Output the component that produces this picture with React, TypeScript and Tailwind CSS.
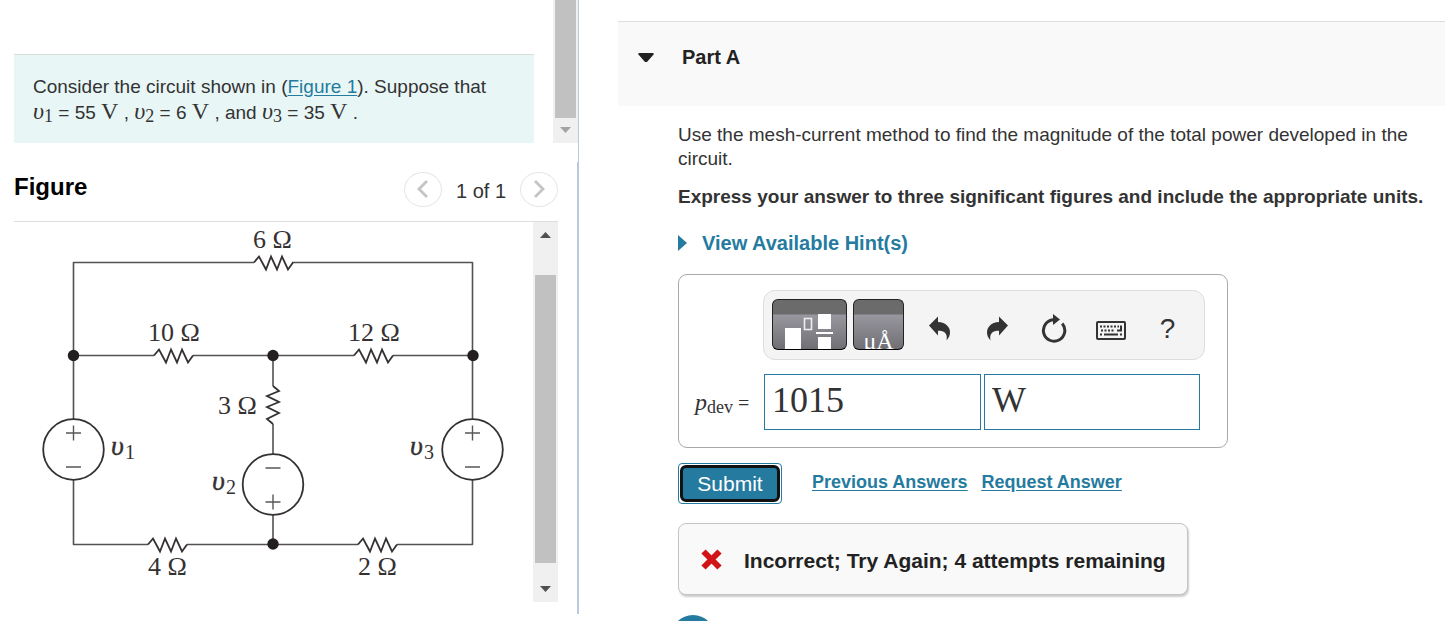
import type { ReactNode } from "react";
import { useState } from "react";

const RESISTOR_H = "l5 -6l7 13l5 -13l6 13l5 -13l6 13l5 -7";

const nodes = [
  [73.5, 355.5],
  [273, 355.5],
  [473, 355.5],
  [273, 544],
];

const labels = [
  { x: 253, y: 248, text: "6 Ω" },
  { x: 148, y: 341, text: "10 Ω" },
  { x: 348, y: 341, text: "12 Ω" },
  { x: 218, y: 414, text: "3 Ω" },
  { x: 148, y: 575, text: "4 Ω" },
  { x: 358, y: 575, text: "2 Ω" },
];

const sources = [
  { cx: 73.5, cy: 449.5, plus: 433, minus: 467, name: "1", x: 111, y: 455 },
  { cx: 273, cy: 484.5, plus: 502, minus: 468, name: "2", x: 212, y: 490 },
  { cx: 472.5, cy: 449.5, plus: 433, minus: 467, name: "3", x: 410, y: 455 },
];

function Circuit() {
  return (
    <svg
      viewBox="14 222 519 380"
      className="block h-[380px] min-w-0 flex-1"
      fill="none"
      role="img"
      aria-label="Circuit with three voltage sources and six resistors"
    >
      <g stroke="#555152" strokeWidth="1.6" strokeLinejoin="round">
        <path d="M73.5 419V262.5H254M292 262.5H472.5V419" />
        <path d="M73.5 355.5H154M193 355.5H354M393 355.5H473" />
        <path d="M273 355V386M273 424V454M273 515V544" />
        <path d="M73.5 480V544.5H148M187 544.5H358M397 544.5H472.5V480" />
      </g>
      <g stroke="#353132" strokeWidth="1.8" strokeLinejoin="miter">
        <path d={`M254 262.5${RESISTOR_H}`} />
        <path d={`M154 355.5${RESISTOR_H}`} />
        <path d={`M354 355.5${RESISTOR_H}`} />
        <path d={`M148 544.5${RESISTOR_H}`} />
        <path d={`M358 544.5${RESISTOR_H}`} />
        <path d="M273 386l6 5l-12 5l12 6l-12 5l12 6l-12 6l6 5" />
      </g>
      {nodes.map(([x, y]) => (
        <circle key={`${x}-${y}`} cx={x} cy={y} r="5.7" fill="#231f20" />
      ))}
      {sources.map((s) => (
        <g key={s.name}>
          <circle cx={s.cx} cy={s.cy} r="30.3" stroke="#353132" strokeWidth="1.8" />
          <path
            d={`M${s.cx - 7.5} ${s.plus}h15M${s.cx} ${s.plus - 7.5}v15M${s.cx - 7.5} ${s.minus}h15`}
            stroke="#5a5657"
            strokeWidth="1.4"
          />
          <text
            x={s.x}
            y={s.y}
            fill="#353132"
            stroke="#353132"
            strokeWidth="0.4"
            className="font-['Liberation_Serif',serif] text-[28px] italic"
          >
            υ
          </text>
          <text x={s.x + 14} y={s.y + 4} fill="#353132" className="font-['Liberation_Serif',serif] text-[20px]">
            {s.name}
          </text>
        </g>
      ))}
      {labels.map((l) => (
        <text key={l.text} x={l.x} y={l.y} fill="#353132" className="font-['Liberation_Serif',serif] text-[26px]">
          {l.text}
        </text>
      ))}
    </svg>
  );
}

function Variable({ index }: { index: number }) {
  return (
    <span className="font-['Liberation_Serif',serif]">
      <i className="text-[24px] leading-none">υ</i>
      <sub className="bottom-[-3px] text-[18px] leading-none">{index}</sub>
    </span>
  );
}

function Volt() {
  return <span className="font-['Liberation_Serif',serif] text-[24px] leading-none">V</span>;
}

function ToolButton({ label, children }: { label: string; children: ReactNode }) {
  return (
    <button type="button" aria-label={label} className="flex h-[51px] w-[57px] items-center justify-center pt-2 text-[#333]">
      {children}
    </button>
  );
}

const darkButton =
  "relative h-[51px] overflow-hidden rounded-md border border-[#222] border-b-black bg-[linear-gradient(#6b6b6b_0,#6b6b6b_14px,#98979f_15px,#6f6e73_50px)]";

function Toolbar() {
  return (
    <div className="flex w-fit items-center rounded-xl border border-[#ddd] bg-[#f4f4f4] px-2 pt-2 pb-[9px]">
      <button type="button" aria-label="Templates" className={`${darkButton} mr-1.5 w-[75px]`}>
        <svg className="block" width="73" height="49" viewBox="0 0 73 49" fill="#fff">
          <rect x="12" y="28" width="16" height="21" />
          <path d="M31.5 18.5h7v11h-7z" fill="none" stroke="#eee" strokeWidth="1.6" />
          <rect x="45" y="14" width="13" height="15" />
          <rect x="43" y="32" width="17" height="2" />
          <rect x="45" y="37" width="13" height="12" />
        </svg>
      </button>
      <button type="button" aria-label="Symbols" className={`${darkButton} flex w-[51px] items-end justify-center`}>
        <span className="-mb-1.5 font-['Liberation_Serif',serif] text-[24px] leading-7 text-white">μÅ</span>
      </button>
      <div className="ml-[7px] flex">
        <ToolButton label="Undo">
          <svg width="22" height="26" viewBox="0 0 22 26" fill="currentColor">
            <path d="M0 9.500 9 .5v5.500C17 6.500 21 11 21 16.500c0 3-1.300 5.500-3.500 8 .7-3.500.2-6-1.500-7.700-1.600-1.600-3.800-2-7-2v4.700z" />
          </svg>
        </ToolButton>
        <ToolButton label="Redo">
          <svg width="22" height="26" viewBox="0 0 22 26" fill="currentColor">
            <path d="M22 9.500 13 .5v5.500C5 6.500 1 11 1 16.500c0 3 1.300 5.500 3.500 8-.7-3.500-.2-6 1.500-7.700 1.600-1.600 3.800-2 7-2v4.700z" />
          </svg>
        </ToolButton>
        <ToolButton label="Reset">
          <svg width="26" height="29" viewBox="0 0 26 29" fill="none">
            <path d="M21.200 9.500A10.700 10.700 0 1 1 13 5.800" stroke="currentColor" strokeWidth="3" />
            <path d="M12 0l7 5.500-7 5.500z" fill="currentColor" />
          </svg>
        </ToolButton>
        <ToolButton label="Keyboard shortcuts">
          <svg className="mt-1" width="30" height="19" viewBox="0 0 30 19" fill="none" stroke="currentColor">
            <rect x="1" y="1" width="28" height="17" rx="1" strokeWidth="2" />
            <path d="M4 5.500h19M5 9.500h14M4 13.500h2M24 13.500h2" strokeWidth="2" strokeDasharray="2 1.500" />
            <path d="M8 13.500h14M21 9.500h4M25 4.500v6" strokeWidth="2" />
          </svg>
        </ToolButton>
        <ToolButton label="Help">
          <span className="text-[28px] leading-none">?</span>
        </ToolButton>
      </div>
    </div>
  );
}

function PagerButton({ label, d }: { label: string; d: string }) {
  return (
    <button
      type="button"
      aria-label={label}
      className="flex h-[35px] w-[38px] items-center justify-center rounded-[50%] border border-[#e6e6e6]"
    >
      <svg width="12" height="18" viewBox="0 0 12 18" fill="none" stroke="#c4c4c4" strokeWidth="2.8">
        <path d={d} />
      </svg>
    </button>
  );
}

export default function App() {
  const [value, setValue] = useState("1015");
  const [units, setUnits] = useState("W");

  return (
    <div className="flex h-screen overflow-hidden bg-white font-['Liberation_Sans',Arial,sans-serif] text-[20px] leading-6 text-[#333]">
      <aside className="w-[579px] shrink-0">
        <div className="flex h-[162px] items-start border-r border-[#b9c9de] pl-3.5">
          <div className="mt-[54px] mr-[19px] h-[89px] flex-1 border-t border-[#d8dcdb] bg-[#e8f6f6] px-[19px] pt-5 text-[19px]">
            <p>
              Consider the circuit shown in (
              <a href="#figure" className="text-[#257b9f] underline underline-offset-2">Figure 1</a>
              ). Suppose that
            </p>
            <p className="whitespace-nowrap">
              <Variable index={1} /> = 55 <Volt /> , <Variable index={2} /> = 6 <Volt /> , and <Variable index={3} /> = 35 <Volt /> .
            </p>
          </div>
          <div className="flex h-[143px] w-[25px] flex-col items-center bg-[#f0f0f0]">
            <div className="h-[118px] w-[21px] bg-[#c1c1c1]" />
            <svg className="mt-[9px]" width="11" height="6" fill="#a3a3a3">
              <path d="M0 0h11L5.500 6z" />
            </svg>
          </div>
        </div>

        <section id="figure" className="h-[452px] border-r-2 border-[#b9c9de] pr-[19px] pl-3.5">
          <div className="flex h-[60px] items-center border-b border-[#ddd] pb-1">
            <h2 className="mt-[-5px] flex-1 text-[24px] font-bold text-black">Figure</h2>
            <div className="mt-[-1px] flex items-center">
              <PagerButton label="Previous figure" d="M10 1 2 9l8 8" />
              <span className="mt-1 w-[78px] text-center">1 of 1</span>
              <PagerButton label="Next figure" d="M2 1l8 8-8 8" />
            </div>
          </div>
          <div className="flex">
            <Circuit />
            <div className="flex h-[380px] w-[25px] flex-col items-center justify-between bg-[#f0f0f0] pt-2.5 pb-2.5">
              <svg width="11" height="6" fill="#505050">
                <path d="M0 6h11L5.500 0z" />
              </svg>
              <div className="mt-3.5 h-[288px] w-[21px] bg-[#c1c1c1]" />
              <svg width="11" height="6" fill="#505050">
                <path d="M0 0h11L5.500 6z" />
              </svg>
            </div>
          </div>
        </section>
      </aside>

      <main className="mt-[21px] mr-[11px] ml-[39px] min-w-0 flex-1">
        <header className="flex h-[85px] items-start border-t border-[#ddd] bg-[#f9f9f9] pt-[23px] pl-5">
          <button type="button" aria-expanded="true" className="flex items-center gap-7 font-bold text-[#222]">
            <svg width="16" height="9" fill="currentColor">
              <path d="M1 0h14l1 1-7 8H7L0 1z" />
            </svg>
            Part A
          </button>
        </header>

        <div className="pt-[17px] pl-[60px]">
          <div className="text-[19px]">
            <p>Use the mesh-current method to find the magnitude of the total power developed in the circuit.</p>
            <p className="mt-3.5 font-bold">Express your answer to three significant figures and include the appropriate units.</p>
          </div>
          <button type="button" className="mt-[22px] flex items-center gap-[15px] font-bold text-[#257b9f]">
            <svg width="9" height="16" fill="currentColor">
              <path d="M0 0l9 8-9 8z" />
            </svg>
            View Available Hint(s)
          </button>

          <div className="mt-[19px] h-[174px] w-[550px] rounded-[9px] border border-[#aaa] pt-[15px]">
            <div className="pl-[84px]">
              <Toolbar />
            </div>
            <div className="mt-3.5 flex items-center">
              <label htmlFor="answer" className="w-[85px] pl-4 font-['Liberation_Serif',serif] whitespace-nowrap">
                <i className="text-[24px]">p</i>
                <sub className="bottom-[-3px] text-[18px]">dev</sub> =
              </label>
              <input
                id="answer"
                value={value}
                onChange={(e) => setValue(e.target.value)}
                className="h-14 w-[217px] border border-[#257b9f] px-[7px] pb-1 font-['Liberation_Serif',serif] text-[36px] outline-none"
              />
              <input
                aria-label="Units"
                value={units}
                onChange={(e) => setUnits(e.target.value)}
                className="ml-[3px] h-14 w-[216px] border border-[#257b9f] px-[7px] pb-1 font-['Liberation_Serif',serif] text-[36px] outline-none"
              />
            </div>
          </div>

          <div className="mt-[15px] flex items-center">
            <div className="rounded-[4px] border border-[#257b9f] p-px">
              <button
                type="button"
                className="block h-[37px] w-[100px] rounded-md border-[3px] border-[#111] bg-[#257b9f] text-[21px] text-white"
              >
                Submit
              </button>
            </div>
            <div className="ml-[30px] flex gap-3.5 pb-1 text-[18px] font-bold text-[#257b9f] underline underline-offset-2">
              <a href="#previous">Previous Answers</a>
              <a href="#request">Request Answer</a>
            </div>
          </div>

          <div className="mt-[19px] flex h-[72px] w-fit items-center gap-[22px] rounded-lg border border-[#c4c4c4] bg-[#f9f9f9] pr-[21px] pl-[22px] text-[21px] font-bold text-[#222] shadow-[1px_2px_2px_#ccc]">
            <svg width="21" height="21" viewBox="0 0 21 21" stroke="#d11216" strokeWidth="6">
              <path d="M2.500 2.500l16 16M18.500 2.500l-16 16" />
            </svg>
            <p className="pt-[3px]">Incorrect; Try Again; 4 attempts remaining</p>
          </div>

          <div className="mt-5 ml-[-7px] size-11 rounded-full bg-[#257b9f]" />
        </div>
      </main>
    </div>
  );
}
